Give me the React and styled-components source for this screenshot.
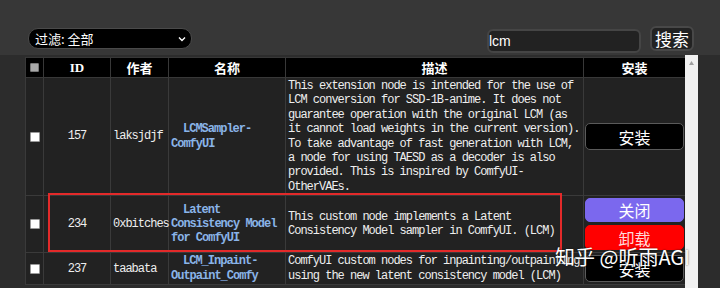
import React from "react";
import styled, { createGlobalStyle } from "styled-components";

const Global = createGlobalStyle`
  html, body { margin: 0; padding: 0; background: #373737; }
  body { font-family: "Liberation Sans", "Noto Sans CJK SC", sans-serif; }
`;

const Page = styled.div`
  position: relative;
  width: 720px;
  height: 288px;
  overflow: hidden;
  box-sizing: border-box;
  padding-top: 26px;
  background: #373737;
`;

const TopBar = styled.div`
  display: flex;
  align-items: flex-start;
  height: 29px;
  padding: 0 26px 0 28px;
`;

const FilterSelect = styled.div`
  margin-top: 2px;
  width: 164px;
  height: 21px;
  box-sizing: border-box;
  background: #000;
  border: 1px solid #4a4a4a;
  border-radius: 10px;
  display: flex;
  align-items: center;
  justify-content: space-between;
  padding: 0 5px 0 6px;
  color: #fff;
  font: 13px "Noto Sans CJK SC", sans-serif;
`;

const Spacer = styled.div`
  flex: 1;
`;

const SearchInput = styled.input`
  margin-top: 3px;
  width: 154px;
  height: 24px;
  box-sizing: border-box;
  background: #222;
  border: 2px solid #454545;
  border-radius: 6px;
  color: #fff;
  font: 14px "Liberation Sans", sans-serif;
  padding: 0;
  outline: none;
`;

const SearchButton = styled.button`
  margin-left: 9px;
  width: 44px;
  height: 25px;
  box-sizing: border-box;
  background: #222;
  border: 2px solid #484848;
  border-radius: 6px;
  color: #fff;
  font: 17px "Noto Sans CJK SC", sans-serif;
  line-height: 1;
  padding: 0;
`;

const TableArea = styled.div`
  display: flex;
  height: 233px;
  padding-left: 25px;
  background: #2c2c2c;
`;

const TableWrap = styled.div`
  width: 660px;
  padding-top: 2px;
`;

const Table = styled.table`
  width: 660px;
  table-layout: fixed;
  border-collapse: collapse;
  font-family: "Liberation Mono", monospace;
  font-size: 12px;
  letter-spacing: -1px;
  color: #eee;
`;

const HeadCell = styled.th`
  height: 20px;
  box-sizing: border-box;
  padding: 0;
  background: #000;
  color: #fff;
  font: bold 13px "Liberation Serif", "Noto Sans CJK SC", serif;
  letter-spacing: 0;
  border: 1px solid #383838;
  text-align: center;
  vertical-align: middle;
`;

const Cell = styled.td`
  background: #222;
  border: 1px solid #3a3a3a;
  padding: 1px 2px;
  line-height: 14.4px;
  vertical-align: middle;
  text-align: ${(p) => p.$align || "left"};
  white-space: ${(p) => (p.$nowrap ? "nowrap" : "normal")};
`;

const NameCell = styled(Cell)`
  text-indent: 12px;
`;

const ActionCell = styled(Cell)`
  padding: 2px 1px;
`;

const NameLink = styled.a`
  color: #8ab4e8;
  font-weight: bold;
  text-decoration: none;
`;

const Check = styled.input.attrs({ type: "checkbox" })`
  appearance: none;
  display: block;
  margin: 0 auto;
  width: ${(p) => (p.$head ? 9 : 10)}px;
  height: ${(p) => (p.$head ? 9 : 10)}px;
  box-sizing: border-box;
  background: ${(p) => (p.$head ? "#a8a8a8" : "#fff")};
  border: 1px solid ${(p) => (p.$head ? "#777" : "#999")};
  border-radius: 1px;
`;

const ActionStack = styled.div`
  display: flex;
  flex-direction: column;
  gap: 3px;
`;

const variants = {
  install: { bg: "#000", border: "#5a5a5a", color: "#fff", h: 27 },
  disable: { bg: "#7b68ee", border: "#7b68ee", color: "#fff", h: 24 },
  uninstall: { bg: "#ff0000", border: "#ff0000", color: "#ffdada", h: 25 },
};

const ActionButton = styled.button`
  display: block;
  width: 100%;
  height: ${(p) => variants[p.$variant].h}px;
  box-sizing: border-box;
  background: ${(p) => variants[p.$variant].bg};
  border: 1px solid ${(p) => variants[p.$variant].border};
  border-radius: 5px;
  color: ${(p) => variants[p.$variant].color};
  font: 16px "Noto Sans CJK SC", sans-serif;
  line-height: 1;
  letter-spacing: 0;
  padding: 0;
`;

const Scrollbar = styled.div`
  width: 13px;
  background: #f1f1f1;
  display: flex;
  justify-content: center;
  padding-top: 6px;
  box-sizing: border-box;
`;

const RedBox = styled.div`
  position: absolute;
  left: 48px;
  top: 193px;
  width: 514px;
  height: 59px;
  box-sizing: border-box;
  border: 2px solid #e32a2a;
  pointer-events: none;
`;

const Watermark = styled.div`
  position: absolute;
  left: 555px;
  top: 247px;
  color: #fff;
  font: 20px "Noto Sans CJK SC", sans-serif;
  line-height: 1;
  white-space: nowrap;
  text-shadow: 0 0 2px rgba(0, 0, 0, 0.7);
  pointer-events: none;
`;

const rows = [
  {
    id: 157,
    author: "laksjdjf",
    name: "LCMSampler-ComfyUI",
    desc:
      "This extension node is intended for the use of LCM conversion for SSD-1B-anime. It does not guarantee operation with the original LCM (as it cannot load weights in the current version). To take advantage of fast generation with LCM, a node for using TAESD as a decoder is also provided. This is inspired by ComfyUI-OtherVAEs.",
    actions: ["install"],
  },
  {
    id: 234,
    author: "0xbitches",
    name: "Latent Consistency Model for ComfyUI",
    desc: "This custom node implements a Latent Consistency Model sampler in ComfyUI. (LCM)",
    actions: ["disable", "uninstall"],
  },
  {
    id: 237,
    author: "taabata",
    name: "LCM_Inpaint-Outpaint_Comfy",
    desc: "ComfyUI custom nodes for inpainting/outpainting using the new latent consistency model (LCM)",
    actions: ["install"],
  },
];

const labels = { install: "安装", disable: "关闭", uninstall: "卸载" };

export default function App() {
  return (
    <Page>
      <Global />
      <TopBar>
        <FilterSelect>
          <span>过滤: 全部</span>
          <svg width="8" height="6" viewBox="0 0 8 6">
            <path d="M1 1.5 L4 4.5 L7 1.5" stroke="#fff" strokeWidth="1.4" fill="none" />
          </svg>
        </FilterSelect>
        <Spacer />
        <SearchInput readOnly value="lcm" />
        <SearchButton>搜索</SearchButton>
      </TopBar>
      <TableArea>
        <TableWrap>
          <Table>
            <colgroup>
              <col style={{ width: 18 }} />
              <col style={{ width: 67 }} />
              <col style={{ width: 58 }} />
              <col style={{ width: 117 }} />
              <col style={{ width: 298 }} />
              <col style={{ width: 102 }} />
            </colgroup>
            <thead>
              <tr>
                <HeadCell>
                  <Check $head readOnly />
                </HeadCell>
                <HeadCell>ID</HeadCell>
                <HeadCell>作者</HeadCell>
                <HeadCell>名称</HeadCell>
                <HeadCell>描述</HeadCell>
                <HeadCell>安装</HeadCell>
              </tr>
            </thead>
            <tbody>
              {rows.map((r) => (
                <tr key={r.id}>
                  <Cell $align="center">
                    <Check readOnly />
                  </Cell>
                  <Cell $align="center">{r.id}</Cell>
                  <Cell $nowrap>{r.author}</Cell>
                  <NameCell>
                    <NameLink href="#">{r.name}</NameLink>
                  </NameCell>
                  <Cell>{r.desc}</Cell>
                  <ActionCell>
                    <ActionStack>
                      {r.actions.map((a) => (
                        <ActionButton key={a} $variant={a}>
                          {labels[a]}
                        </ActionButton>
                      ))}
                    </ActionStack>
                  </ActionCell>
                </tr>
              ))}
            </tbody>
          </Table>
        </TableWrap>
        <Scrollbar>
          <svg width="5" height="4" viewBox="0 0 5 4">
            <path d="M0 4 L2.5 0 L5 4 Z" fill="#a0a0a0" />
          </svg>
        </Scrollbar>
      </TableArea>
      <RedBox />
      <Watermark>知乎 @听雨AGI</Watermark>
    </Page>
  );
}
